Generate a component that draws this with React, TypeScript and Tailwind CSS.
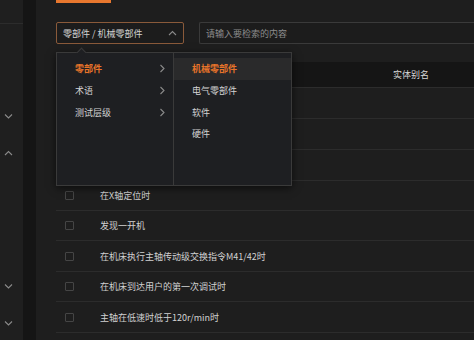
import React from "react";

const font = { fontFamily: '"Noto Sans CJK SC", "Noto Sans", sans-serif' };

function Chev({ dir, className }: { dir: "up" | "down" | "right"; className?: string }) {
  const d =
    dir === "up" ? "M1 5 L4.5 1.5 L8 5" : dir === "down" ? "M1 1.5 L4.5 5 L8 1.5" : "M1.5 1 L5 4.5 L1.5 8";
  const w = dir === "right" ? 7 : 9;
  const h = dir === "right" ? 9 : 7;
  return (
    <svg width={w} height={h} viewBox={`0 0 ${w} ${h}`} className={className}>
      <path d={d} fill="none" stroke="currentColor" strokeWidth="1.1" />
    </svg>
  );
}

const rows: { h: string; text: string }[] = [
  { h: "h-[31px]", text: "" },
  { h: "h-[31px]", text: "" },
  { h: "h-[31px]", text: "" },
  { h: "h-[30px]", text: "在X轴定位时" },
  { h: "h-[30px]", text: "发现一开机" },
  { h: "h-[31px]", text: "在机床执行主轴传动级交换指令M41/42时" },
  { h: "h-[30px]", text: "在机床到达用户的第一次调试时" },
  { h: "h-[31px]", text: "主轴在低速时低于120r/min时" },
  { h: "h-[31px]", text: "" },
];

export default function App() {
  return (
    <div
      className="relative w-[474px] h-[340px] overflow-hidden bg-[#1e1e1e] flex text-[9px] leading-none"
      style={font}
    >
      {/* sidebar */}
      <div className="w-[23px] h-full bg-[#1f1f1f] flex flex-col shrink-0">
        <div className="h-[24px] border-b border-[#2c2c2c]" />
        <div className="flex flex-col items-center pr-[7px] text-[#8a8a8a]">
          <Chev dir="down" className="mt-[89px]" />
          <Chev dir="up" className="mt-[30px]" />
          <Chev dir="down" className="mt-[126px]" />
          <Chev dir="down" className="mt-[30px]" />
        </div>
      </div>
      <div className="w-[13px] h-full bg-[#151515] shrink-0" />

      {/* main */}
      <div className="flex-1 flex flex-col pl-[20px] bg-[#1e1e1e]">
        <div className="h-[3px] flex shrink-0">
          <div className="w-[55px] h-full bg-[#e8772e]" />
        </div>
        <div className="h-px bg-[#2a2a2a] -ml-[20px]" />
        <div className="flex items-center gap-[15px] mt-[19px] h-[22px] shrink-0">
          <div className="w-[128px] h-full border border-[#8a5a3a] rounded-[2px] flex items-center justify-between pl-[6px] pr-[6px] bg-[#1c1c1c]">
            <span className="text-[#d4d4d4]">零部件 / 机械零部件</span>
            <Chev dir="up" className="text-[#8a8a8a]" />
          </div>
          <div className="flex-1 h-full border border-[#3a3a3a] border-r-0 rounded-l-[2px] flex items-center pl-[6px] bg-[#1c1c1c]">
            <span className="text-[#8c8c8c]">请输入要检索的内容</span>
          </div>
        </div>

        {/* table */}
        <div className="mt-[18px] flex flex-col">
          <div className="h-[26px] bg-[#151515] flex items-center border-b border-[#2c2c2c]">
            <div className="w-[292px] shrink-0" />
            <div className="flex-1 text-center text-[#d8d8d8]">实体别名</div>
          </div>
          {rows.map((r, i) => (
            <div key={i} className={`${r.h} flex items-center border-b border-[#2c2c2c] shrink-0`}>
              <div className="w-[9px] h-[9px] border border-[#454545] rounded-[1px] ml-[9px]" />
              <span className="ml-[26px] text-[#d2d2d2]">{r.text}</span>
            </div>
          ))}
        </div>
      </div>

      {/* cascader dropdown */}
      <div className="absolute left-[56px] top-[52px] w-[236px] h-[134px] bg-[#1e1f22] border border-[#3a3a3a] shadow-[0_2px_8px_rgba(0,0,0,0.6)] flex">
        <div className="absolute -top-[4px] left-[21px] w-[7px] h-[7px] rotate-45 bg-[#1e1f22] border-l border-t border-[#3a3a3a]" />
        <div className="w-[117px] h-full border-r border-[#3a3a3a] pt-[5px] flex flex-col">
          {[
            { t: "零部件", a: true },
            { t: "术语", a: false },
            { t: "测试层级", a: false },
          ].map((it) => (
            <div key={it.t} className="h-[21.7px] flex items-center justify-between pl-[18px] pr-[7px]">
              <span className={it.a ? "text-[#e8742a] font-bold" : "text-[#d4d4d4]"}>{it.t}</span>
              <Chev dir="right" className="text-[#8a8a8a]" />
            </div>
          ))}
        </div>
        <div className="flex-1 h-full pt-[5px] flex flex-col">
          {[
            { t: "机械零部件", a: true },
            { t: "电气零部件", a: false },
            { t: "软件", a: false },
            { t: "硬件", a: false },
          ].map((it) => (
            <div
              key={it.t}
              className={`h-[21.7px] flex items-center pl-[18px] ${it.a ? "bg-[#2a2a2b]" : ""}`}
            >
              <span className={it.a ? "text-[#e8742a] font-bold" : "text-[#d4d4d4]"}>{it.t}</span>
            </div>
          ))}
        </div>
      </div>
    </div>
  );
}
